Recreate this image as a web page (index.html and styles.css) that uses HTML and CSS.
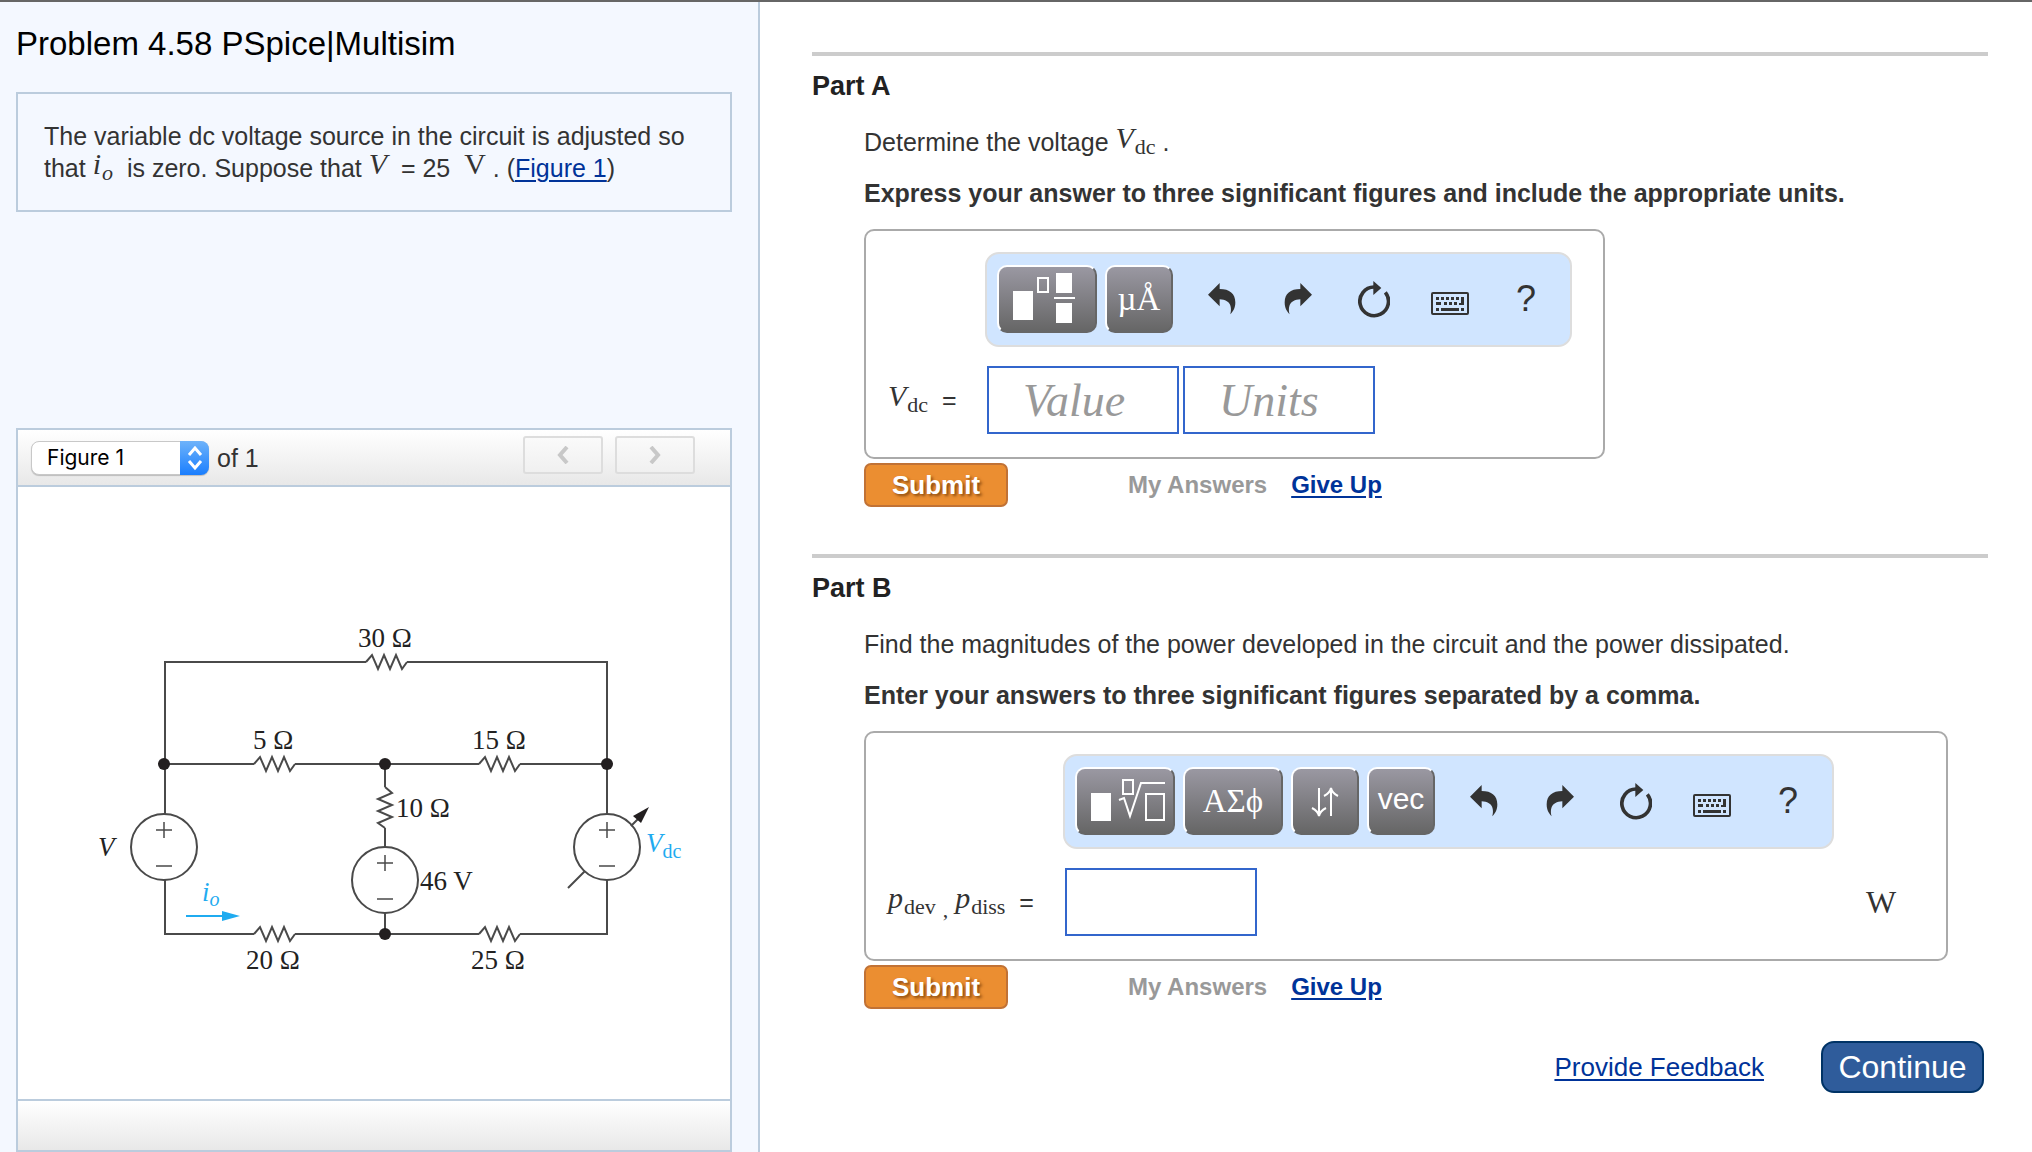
FILE: index.html
```
<!DOCTYPE html>
<html lang="en">
<head>
    <meta charset="UTF-8">
    <meta name="viewport" content="width=device-width, initial-scale=1.0">
    <title>Problem 4.58 PSpice|Multisim</title>
    <link rel="stylesheet" href="styles.css">
</head>
<body>
    <aside class="problem">
        <h1>Problem 4.58 PSpice|Multisim</h1>
        <div class="statement">
            The variable dc voltage source in the circuit is adjusted so that <span class="math"><var>i</var><sub><var>o</var></sub></span>&nbsp; is zero. Suppose that <span class="math"><var>V</var></span>&nbsp; = 25 &nbsp;<span class="math">V</span> . (<a href="#figure">Figure 1</a>)
        </div>
        <section class="figure" id="figure">
            <div class="figure-header">
                <span class="select-wrap">
                    <select class="figure-select" id="figureSelect" aria-label="Figure">
                        <option>Figure 1</option>
                    </select>
                    <svg class="select-arrows" viewBox="0 0 29 34" aria-hidden="true"><path d="M9 14l6-7 6 7M9 20l6 7 6-7"/></svg>
                </span>
                <label for="figureSelect">of 1</label>
                <div class="figure-nav">
                    <button class="nav-btn" aria-label="Previous figure" disabled><svg viewBox="0 0 12 18"><path d="M10 1L3 9l7 8"/></svg></button>
                    <button class="nav-btn" aria-label="Next figure" disabled><svg viewBox="0 0 12 18"><path d="M2 1l7 8-7 8"/></svg></button>
                </div>
            </div>
            <div class="figure-body">
                <svg class="circuit" viewBox="64 615 620 356" role="img" aria-label="Circuit diagram">
                    <defs>
                        <path id="resistor" d="M0 0l6-7 6 14 6-14 6 14 6-14 6 14 5-7"/>
                        <g id="source">
                            <circle r="33"/>
                            <path class="thin" d="M-8-17H8M0-25V-9M-8 19H8"/>
                        </g>
                    </defs>
                    <!-- wires -->
                    <path d="M366 662H165V814M165 880V934H254M407 662H607V814M607 880V934H520"/>
                    <path d="M165 764H254M295 764H479M520 764H607M295 934H479"/>
                    <path d="M385 764V787M385 828V847M385 913V934"/>
                    <use href="#resistor" x="366" y="662"/>
                    <use href="#resistor" x="254" y="764"/>
                    <use href="#resistor" x="479" y="764"/>
                    <use href="#resistor" x="254" y="934"/>
                    <use href="#resistor" x="479" y="934"/>
                    <use href="#resistor" transform="translate(385 787) rotate(90)"/>
                    <use href="#source" x="164" y="847"/>
                    <use href="#source" x="385" y="880"/>
                    <use href="#source" x="607" y="847"/>
                    <path d="M568 888L585 871M631 826L640 817"/>
                    <path class="fill" d="M649 807L633 816L641 823Z"/>
                    <g class="fill">
                        <circle cx="164" cy="764" r="6"/>
                        <circle cx="385" cy="764" r="6"/>
                        <circle cx="607" cy="764" r="6"/>
                        <circle cx="385" cy="934" r="6"/>
                    </g>
                    <path class="current" d="M186 916H224"/>
                    <path class="current-head" d="M222 911L240 916L222 921Z"/>
                    <!-- labels -->
                    <text x="358" y="647">30 Ω</text>
                    <text x="253" y="749">5 Ω</text>
                    <text x="472" y="749">15 Ω</text>
                    <text x="396" y="817">10 Ω</text>
                    <text x="420" y="890">46 V</text>
                    <text x="246" y="969">20 Ω</text>
                    <text x="471" y="969">25 Ω</text>
                    <text x="98" y="856" class="italic">V</text>
                    <text x="202" y="901" class="italic blue">i<tspan class="small" dy="5">o</tspan></text>
                    <text x="646" y="852" class="blue"><tspan class="italic">V</tspan><tspan class="small" dy="6">dc</tspan></text>
                </svg>
            </div>
            <div class="figure-footer"></div>
        </section>
    </aside>

    <main class="parts">
        <section class="part">
            <h2>Part A</h2>
            <div class="part-body">
                <p>Determine the voltage <span class="math"><var>V</var><sub>dc</sub></span> .</p>
                <p class="instructions">Express your answer to three significant figures and include the appropriate units.</p>
                <div class="answer answer-a">
                    <div class="toolbar">
                        <button class="tool wide" aria-label="Templates">
                            <svg viewBox="0 0 96 64">
                                <path class="white" d="M14 24h20v29H14zM57 6h16v20H57zM55 30h21v2H55zM57 36h16v20H57z"/>
                                <path class="outline" d="M39 11h10v14H39z"/>
                            </svg>
                        </button>
                        <button class="tool symbols">µÅ</button>
                        <div class="tool-icons">
                            <button class="icon" aria-label="Undo"><svg class="arrow" viewBox="0 0 84 96"><path d="M0 35L35 0V18C65 18 82 32 82 58C82 76 75 86 67 94C72 76 70 50 35 49V70Z"/></svg></button>
                            <button class="icon" aria-label="Redo"><svg class="arrow" viewBox="0 0 84 96"><path d="M84 35L49 0V18C19 18 2 32 2 58C2 76 9 86 17 94C12 76 14 50 49 49V70Z"/></svg></button>
                            <button class="icon" aria-label="Reset"><svg class="reset" viewBox="0 0 96 111"><path class="ring" d="M82 34A43 43 0 1 1 48 18"/><path d="M46 0L70 21L46 42Z"/></svg></button>
                            <button class="icon" aria-label="Keyboard"><svg class="keyboard" viewBox="0 0 40 34"><rect class="case" x="2" y="11" width="36" height="21" rx="1"/><path d="M6 15h3v3H6zM11 15h3v3h-3zM16 15h3v3h-3zM21 15h3v3h-3zM26 15h3v3h-3zM31 15h3v8h-5v-2h2zM6 20h5v3H6zM14 20h3v3h-3zM19 20h3v3h-3zM24 20h3v3h-3zM6 26h3v3H6zM11 26h18v3H11zM31 26h3v3h-3z"/></svg></button>
                            <button class="icon" aria-label="Help">?</button>
                        </div>
                    </div>
                    <label class="lhs" for="value"><span class="math"><var>V</var><sub>dc</sub></span>&nbsp; =</label>
                    <div class="fields">
                        <input type="text" id="value" placeholder="Value">
                        <input type="text" id="units" placeholder="Units" aria-label="Units">
                    </div>
                </div>
                <div class="actions">
                    <button class="submit">Submit</button>
                    <span class="my-answers">My Answers</span>
                    <a class="give-up" href="#">Give Up</a>
                </div>
            </div>
        </section>

        <section class="part">
            <h2>Part B</h2>
            <div class="part-body">
                <p>Find the magnitudes of the power developed in the circuit and the power dissipated.</p>
                <p class="instructions">Enter your answers to three significant figures separated by a comma.</p>
                <div class="answer answer-b">
                    <div class="toolbar">
                        <button class="tool wide" aria-label="Templates">
                            <svg viewBox="0 0 96 64">
                                <path class="white" d="M14 24h20v28H14z"/>
                                <path class="outline" d="M46 11h10v14H46zM69 25h18v26H69zM42 31l5-2 6 18L64 14H88"/>
                            </svg>
                        </button>
                        <button class="tool wide greek">ΑΣϕ</button>
                        <button class="tool" aria-label="Subscript and superscript">
                            <svg viewBox="0 0 64 64"><path class="outline" d="M26 19V47M19 39Q25 42 26 47Q27 42 33 39M38 47V19M31 27Q37 24 38 19Q39 24 45 27"/></svg>
                        </button>
                        <button class="tool vec">vec</button>
                        <div class="tool-icons">
                            <button class="icon" aria-label="Undo"><svg class="arrow" viewBox="0 0 84 96"><path d="M0 35L35 0V18C65 18 82 32 82 58C82 76 75 86 67 94C72 76 70 50 35 49V70Z"/></svg></button>
                            <button class="icon" aria-label="Redo"><svg class="arrow" viewBox="0 0 84 96"><path d="M84 35L49 0V18C19 18 2 32 2 58C2 76 9 86 17 94C12 76 14 50 49 49V70Z"/></svg></button>
                            <button class="icon" aria-label="Reset"><svg class="reset" viewBox="0 0 96 111"><path class="ring" d="M82 34A43 43 0 1 1 48 18"/><path d="M46 0L70 21L46 42Z"/></svg></button>
                            <button class="icon" aria-label="Keyboard"><svg class="keyboard" viewBox="0 0 40 34"><rect class="case" x="2" y="11" width="36" height="21" rx="1"/><path d="M6 15h3v3H6zM11 15h3v3h-3zM16 15h3v3h-3zM21 15h3v3h-3zM26 15h3v3h-3zM31 15h3v8h-5v-2h2zM6 20h5v3H6zM14 20h3v3h-3zM19 20h3v3h-3zM24 20h3v3h-3zM6 26h3v3H6zM11 26h18v3H11zM31 26h3v3h-3z"/></svg></button>
                            <button class="icon" aria-label="Help">?</button>
                        </div>
                    </div>
                    <label class="lhs" for="power"><span class="math"><var>p</var><sub>dev</sub></span> <sub class="math-comma">,</sub> <span class="math"><var>p</var><sub>diss</sub></span>&nbsp; =</label>
                    <div class="fields">
                        <input type="text" id="power">
                    </div>
                    <span class="unit">W</span>
                </div>
                <div class="actions">
                    <button class="submit">Submit</button>
                    <span class="my-answers">My Answers</span>
                    <a class="give-up" href="#">Give Up</a>
                </div>
            </div>
        </section>

        <footer class="page-footer">
            <a href="#">Provide Feedback</a>
            <button class="continue">Continue</button>
        </footer>
    </main>
</body>
</html>
```

FILE: styles.css
```
* {
    box-sizing: border-box;
}
body {
    margin: 0;
    min-height: 100vh;
    display: grid;
    grid-template-columns: 95fr 159fr;
    border-top: 2px solid #666;
    font-family: 'Liberation Sans', Arial, sans-serif;
    font-size: 25px;
    line-height: 32px;
    color: #333;
    background: #fff;
}
button, input, select {
    font-family: inherit;
    margin: 0;
    padding: 0;
}
a {
    color: #039;
    text-underline-offset: 3px;
}

/* math */
.math {
    font-family: 'Liberation Serif', 'Times New Roman', serif;
    font-size: 30px;
    line-height: 0;
    vertical-align: 3px;
}
.math sub, .math-comma {
    font-family: 'Liberation Serif', 'Times New Roman', serif;
    font-size: 22px;
    line-height: 0;
    vertical-align: -6px;
}
.math var + sub {
    margin-left: 1px;
}

/* left side */
.problem {
    display: flex;
    flex-direction: column;
    padding: 22px 26px 0 16px;
    background: #f4f8ff;
    border-right: 2px solid #bcd;
}
h1 {
    margin: 0;
    font-size: 33px;
    line-height: 40px;
    font-weight: normal;
    color: #000;
}
.statement {
    margin-top: 28px;
    padding: 26px;
    border: 2px solid #bcd;
}
.figure {
    flex: 1;
    display: flex;
    flex-direction: column;
    margin-top: 216px;
    border: 2px solid #bcd;
    background: #fff;
}
.figure-header {
    display: flex;
    align-items: center;
    height: 57px;
    padding: 0 35px 0 13px;
    border-bottom: 2px solid #bcd;
    background: linear-gradient(#fff, #e8e8e8);
}
.figure-header label {
    margin-left: 8px;
}
.select-wrap {
    position: relative;
    display: flex;
}
.figure-select {
    appearance: none;
    width: 178px;
    height: 34px;
    padding-left: 15px;
    border: 1px solid #c8c8c8;
    border-radius: 8px;
    background: #fff;
    box-shadow: 0 1px 1px rgba(0, 0, 0, 0.2);
    font-family: Inter, sans-serif;
    font-size: 21px;
    color: #000;
}
.select-arrows {
    position: absolute;
    top: 0;
    right: 0;
    width: 29px;
    height: 34px;
    border-radius: 0 8px 8px 0;
    background: linear-gradient(#6eb3fa, #1a7efe);
    fill: none;
    stroke: #fff;
    stroke-width: 3;
    pointer-events: none;
}
.figure-nav {
    display: flex;
    gap: 12px;
    margin: 0 0 6px auto;
}
.nav-btn {
    display: flex;
    align-items: center;
    justify-content: center;
    width: 80px;
    height: 38px;
    border: 2px solid #ddd;
    border-radius: 3px;
    background: linear-gradient(#fafafa, #f0f0f0);
}
.nav-btn svg {
    width: 12px;
    height: 18px;
    fill: none;
    stroke: #c8c8c8;
    stroke-width: 4;
}
.figure-body {
    flex: 1;
    display: flex;
    align-items: center;
    justify-content: center;
}
.figure-footer {
    height: 51px;
    border-top: 2px solid #bcd;
    background: linear-gradient(#fff, #e8e8e8);
}

/* circuit drawing */
.circuit {
    width: 620px;
    height: 356px;
    fill: none;
    stroke: #4a4a4a;
    stroke-width: 2;
}
.circuit .thin {
    stroke-width: 1.5;
}
.circuit .fill {
    fill: #231f20;
    stroke: none;
}
.circuit text {
    font-family: 'Liberation Serif', 'Times New Roman', serif;
    font-size: 27px;
    fill: #222;
    stroke: none;
}
.circuit .italic {
    font-style: italic;
}
.circuit .blue {
    fill: #1fabf0;
}
.circuit .small {
    font-size: 20px;
}
.circuit .current {
    stroke: #1fabf0;
}
.circuit .current-head {
    fill: #1fabf0;
    stroke: none;
}

/* right side */
.parts {
    padding: 50px 44px 0 52px;
}
.part {
    margin-bottom: 47px;
    border-top: 4px solid #ccc;
}
.part + .part {
    margin-bottom: 32px;
}
h2 {
    margin: 14px 0 24px;
    font-size: 27px;
    line-height: 32px;
    color: #222;
}
.part-body {
    padding: 0 40px 0 52px;
}
.part-body p {
    margin: 0 0 19px;
}
.part-body .instructions {
    margin-bottom: 20px;
    font-weight: bold;
}
.answer {
    display: grid;
    align-items: center;
    row-gap: 19px;
    padding: 21px 31px 23px 20px;
    border: 2px solid #aaa;
    border-radius: 10px;
}
.answer-a {
    width: fit-content;
    grid-template-columns: 99px auto;
}
.answer-b {
    grid-template-columns: 177px auto 1fr;
}
.toolbar {
    grid-column: 2;
    display: flex;
    gap: 8px;
    height: 95px;
    padding: 11px 10px;
    border: 2px solid #ddd;
    border-radius: 14px;
    background: #d0e5ff;
}
.tool {
    display: flex;
    align-items: center;
    justify-content: center;
    width: 68px;
    height: 68px;
    border: 2px solid;
    border-color: #fff #666 #666 #fff;
    border-radius: 10px;
    background: linear-gradient(#9a98a2, #666);
    color: #fff;
}
.tool.wide {
    width: 100px;
}
.tool svg {
    height: 64px;
}
.white {
    fill: #fff;
}
.outline {
    fill: none;
    stroke: #fff;
    stroke-width: 2;
}
.symbols, .greek {
    font-family: 'Liberation Serif', 'Times New Roman', serif;
    font-size: 33px;
}
.vec {
    font-size: 30px;
    padding-bottom: 4px;
}
.tool-icons {
    display: flex;
    gap: 8px;
    margin-left: 7px;
}
.icon {
    display: flex;
    align-items: center;
    justify-content: center;
    width: 68px;
    height: 68px;
    border: none;
    background: none;
    font-size: 36px;
    color: #333;
}
.icon svg {
    fill: #333;
}
.arrow {
    width: 28px;
    height: 32px;
}
.reset {
    width: 32px;
    height: 37px;
}
.ring {
    fill: none;
    stroke: #333;
    stroke-width: 11;
}
.keyboard {
    width: 40px;
    height: 34px;
}
.case {
    fill: none;
    stroke: #333;
    stroke-width: 2;
}
.lhs {
    grid-column: 1;
    padding-left: 2px;
    white-space: nowrap;
}
.fields {
    display: flex;
    gap: 4px;
    padding-left: 2px;
}
.fields input {
    width: 192px;
    height: 68px;
    padding: 0 34px;
    border: 2px solid #36c;
    background: #fff;
    font-family: 'Liberation Serif', 'Times New Roman', serif;
    font-size: 46px;
}
.fields input::placeholder {
    color: #999;
    font-style: italic;
    opacity: 1;
}
.unit {
    padding-left: 32px;
    font-family: 'Liberation Serif', 'Times New Roman', serif;
    font-size: 32px;
}
.actions {
    display: flex;
    align-items: center;
    margin-top: 4px;
    font-size: 24px;
    font-weight: bold;
}
.submit {
    width: 144px;
    height: 44px;
    border: 2px solid #c17235;
    border-radius: 7px;
    background: #eb8e31;
    color: #fff;
    font-size: 26px;
    font-weight: bold;
    text-shadow: 2px 2px 3px #8a4a10;
}
.my-answers {
    margin: 0 24px 0 120px;
    color: #999;
}
.page-footer {
    display: flex;
    align-items: center;
    justify-content: flex-end;
    gap: 57px;
    padding-right: 4px;
    font-size: 26px;
}
.continue {
    width: 163px;
    height: 52px;
    border: 2px solid #036;
    border-radius: 13px;
    background: #2f5c9b;
    color: #fff;
    font-size: 32px;
}
```
